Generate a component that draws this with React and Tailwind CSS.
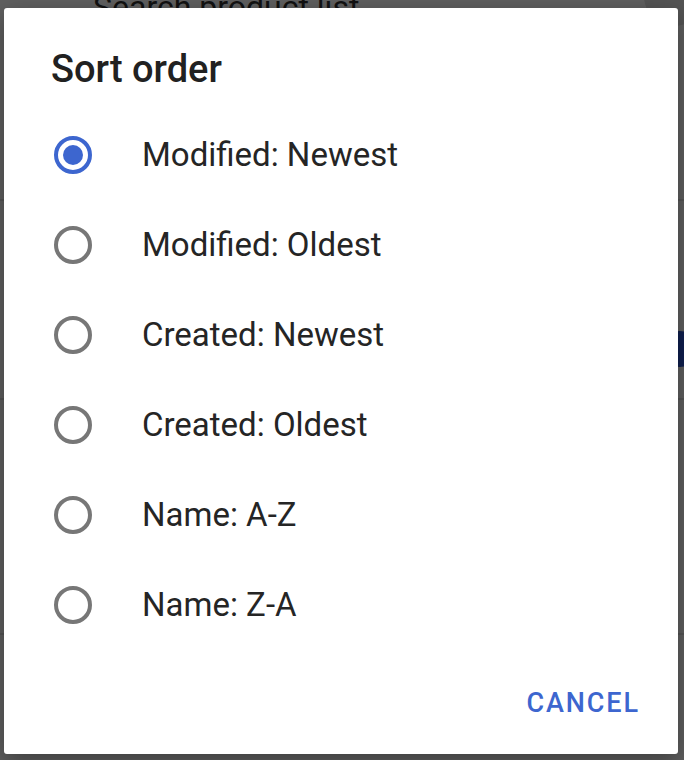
import React from 'react';

const OPTIONS = [
  'Modified: Newest',
  'Modified: Oldest',
  'Created: Newest',
  'Created: Oldest',
  'Name: A-Z',
  'Name: Z-A',
];

function Radio({ checked }) {
  return (
    <span
      className={
        'flex h-[38px] w-[38px] shrink-0 items-center justify-center rounded-full border-[4px] ' +
        (checked ? 'border-[#3d66cf]' : 'border-[#777777]')
      }
    >
      {checked && <span className="h-[20px] w-[20px] rounded-full bg-[#3d66cf]" />}
    </span>
  );
}

function SortDialog({ value, onChange }) {
  return (
    <div className="absolute left-[4px] top-[8px] flex h-[746px] w-[674px] flex-col rounded-[3px] bg-white shadow-[0_8px_24px_rgba(0,0,0,0.35)]">
      <h2 className="ml-[47px] mt-[43px] text-[38px] font-medium leading-[37px] text-[#212121]">
        Sort order
      </h2>
      <ul className="mt-[22px] flex flex-col">
        {OPTIONS.map((label, i) => (
          <li
            key={label}
            onClick={() => onChange(i)}
            className="flex h-[90px] cursor-pointer items-center pl-[50px]"
          >
            <Radio checked={value === i} />
            <span className="ml-[50px] text-[33px] leading-[90px] text-[#252525]">
              {label}
            </span>
          </li>
        ))}
      </ul>
      <div className="mt-[40px] flex justify-end pr-[38px]">
        <button className="text-[27px] font-medium uppercase leading-none tracking-[0.07em] text-[#3d66cf]">
          Cancel
        </button>
      </div>
    </div>
  );
}

export default function App() {
  const [sort, setSort] = React.useState(0);

  return (
    <div
      className="relative h-[760px] w-[684px] overflow-hidden bg-[#5f5f5f]"
      style={{ fontFamily: 'Roboto, "Noto Sans", sans-serif' }}
    >
      {/* dimmed page behind the dialog */}
      <div className="flex h-[201px] items-start border-b-2 border-[#555555]">
        <span className="ml-[93px] -mt-[13px] text-[32px] leading-[40px] text-[#111111]">
          Search product list
        </span>
        <span className="ml-auto -mr-[20px] -mt-[34px] h-[60px] w-[60px] rounded-full bg-[#545454]" />
      </div>
      <div className="relative h-[199px] border-b-2 border-[#555555]">
        <span className="absolute -right-[14px] top-[130px] h-[36px] w-[36px] rounded-full bg-[#0f1f4f]" />
      </div>
      <div className="h-[235px] border-b-2 border-[#555555]" />

      <SortDialog value={sort} onChange={setSort} />
    </div>
  );
}
